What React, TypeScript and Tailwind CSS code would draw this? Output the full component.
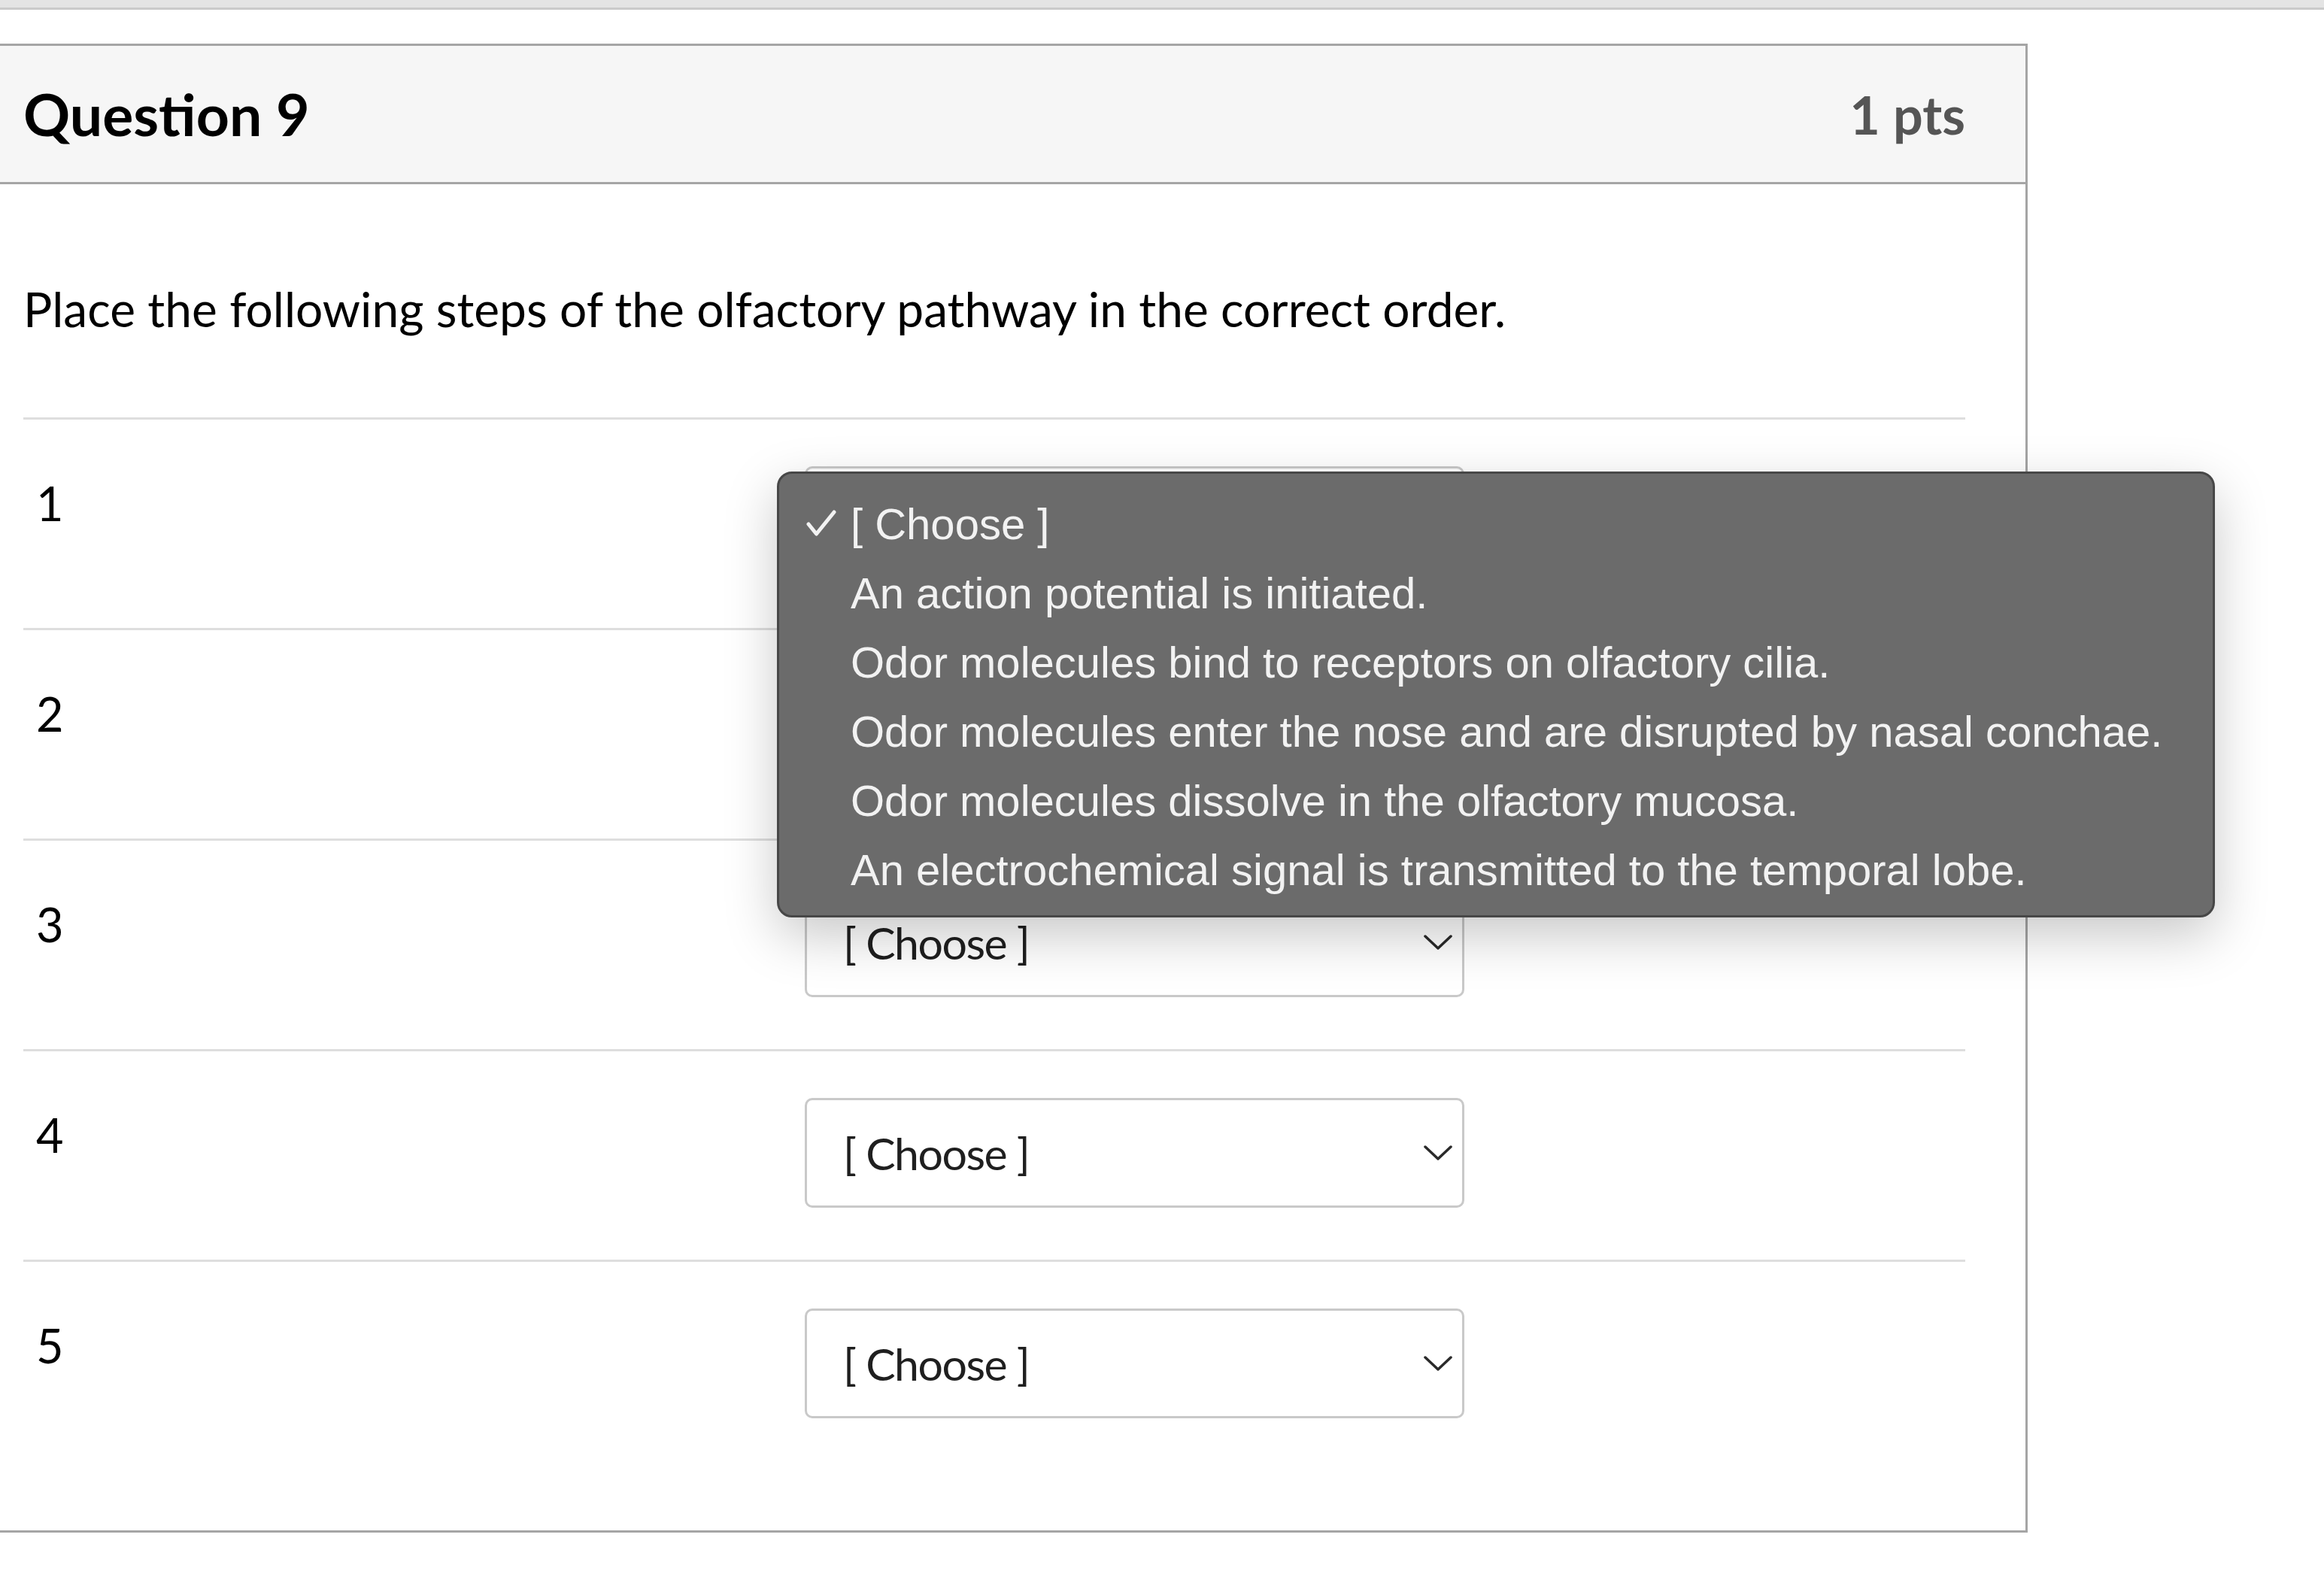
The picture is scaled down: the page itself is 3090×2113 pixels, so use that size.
const options = [
  'An action potential is initiated.',
  'Odor molecules bind to receptors on olfactory cilia.',
  'Odor molecules enter the nose and are disrupted by nasal conchae.',
  'Odor molecules dissolve in the olfactory mucosa.',
  'An electrochemical signal is transmitted to the temporal lobe.',
];

function Chevron() {
  return (
    <svg width="38" height="22" viewBox="0 0 38 22" fill="none">
      <polyline points="2,3 19,19 36,3" stroke="#2a2a2a" strokeWidth="3.5" strokeLinecap="round" strokeLinejoin="round" />
    </svg>
  );
}

function ChooseSelect() {
  return (
    <div className="flex h-[146px] w-[877px] items-center justify-between rounded-[10px] border-[3px] border-[#c9c9c9] bg-white pl-[48px] pr-[13px]">
      <span className="text-[59px] leading-none tracking-[-1.5px] text-[#1f1f1f]">[ Choose ]</span>
      <Chevron />
    </div>
  );
}

export default function App() {
  return (
    <div className="relative h-[2113px] w-[3090px] overflow-hidden bg-white font-['Lato','Noto_Sans',sans-serif]">
      {/* browser chrome strip */}
      <div className="h-[13px] border-b-[3px] border-[#cacaca] bg-[#e4e4e4]" />

      {/* question card */}
      <div className="mt-[45px] w-[2696px] border-[3px] border-l-0 border-[#a5a5a5]">
        <div className="flex h-[184px] items-center justify-between border-b-[3px] border-[#a5a5a5] bg-[#f6f6f6] pl-[31px] pr-[80px]">
          <h2 className="text-[77px] font-bold leading-[1.2] text-black">Question 9</h2>
          <span className="text-[70px] font-bold leading-[1.2] text-[#555555]">1 pts</span>
        </div>

        <div className="pb-[80px] pl-[31px] pr-[80px] pt-[118px]">
          <p className="text-[64px] leading-[1.5] text-black">
            Place the following steps of the olfactory pathway in the correct order.
          </p>

          <div className="mt-[96px]">
            {[1, 2, 3, 4, 5].map((n) => (
              <div key={n} className="flex h-[280px] items-start border-t-[3px] border-[#dedede] pt-[62px]">
                <div className="w-[1039px] pl-[17px] pt-[2px] text-[63px] leading-[1.5] text-black">{n}</div>
                <ChooseSelect />
              </div>
            ))}
          </div>
        </div>
      </div>

      {/* open native select menu */}
      <div className="absolute left-[1033px] top-[627px] w-[1912px] rounded-[20px] border-[3px] border-[#474747] bg-[#6b6b6b] pb-[15px] pt-[20px] font-['Liberation_Sans','Arial',sans-serif] shadow-[0_24px_70px_rgba(0,0,0,0.22)]">
        <div className="flex h-[92px] items-center pl-[36px] text-[58px] text-[#f2f2f2]">
          <span className="w-[59px]">
            <svg width="40" height="36" viewBox="0 0 40 36" fill="none">
              <path d="M3 19 L13.5 32 L37 3" stroke="#f2f2f2" strokeWidth="5" strokeLinecap="round" strokeLinejoin="round" />
            </svg>
          </span>
          <span>[ Choose ]</span>
        </div>
        {options.map((o) => (
          <div key={o} className="flex h-[92px] items-center pl-[95px] text-[58px] text-[#f2f2f2]">
            {o}
          </div>
        ))}
      </div>
    </div>
  );
}
